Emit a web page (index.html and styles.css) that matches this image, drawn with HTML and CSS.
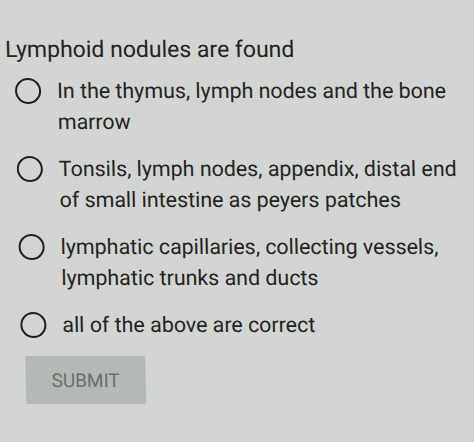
FILE: index.html
```html
<!DOCTYPE html>
<html>
<head>
<meta charset="utf-8">
<link rel="stylesheet" href="styles.css">
</head>
<body>
<div class="page">
  <div class="question">Lymphoid nodules are found</div>
  <div class="options">
    <label class="option"><span class="radio"></span><span class="text">In the thymus, lymph nodes and the bone marrow</span></label>
    <label class="option"><span class="radio"></span><span class="text">Tonsils, lymph nodes, appendix, distal end of small intestine as peyers patches</span></label>
    <label class="option"><span class="radio"></span><span class="text">lymphatic capillaries, collecting vessels, lymphatic trunks and ducts</span></label>
    <label class="option"><span class="radio"></span><span class="text">all of the above are correct</span></label>
  </div>
  <button class="submit">SUBMIT</button>
</div>
</body>
</html>
```
FILE: styles.css
```css
html, body {
  margin: 0;
  padding: 0;
  background: #d3d5d2;
  width: 474px;
  height: 442px;
  overflow: hidden;
}
.page {
  font-family: Roboto, "Liberation Sans", sans-serif;
  color: #222423;
  padding: 35px 0 0 4px;
  transform: skewX(1.3deg);
  transform-origin: 0 0;
  box-sizing: border-box;
  height: 442px;
}
.question {
  font-size: 23px;
  line-height: 30px;
}
.options {
  display: flex;
  flex-direction: column;
  gap: 16px;
  margin-top: 10px;
  padding-left: 9px;
}
.option {
  display: flex;
  align-items: flex-start;
  gap: 16px;
  font-size: 21.4px;
  line-height: 31px;
}
.radio {
  flex: none;
  width: 26px;
  height: 26px;
  box-sizing: border-box;
  border: 2.5px solid #1e201f;
  border-radius: 50%;
  margin-top: 2.5px;
}
.text {
  width: 402px;
}
.submit {
  margin: 16px 0 0 13px;
  width: 120px;
  height: 48px;
  border: none;
  border-radius: 2px;
  background: #b4b9b5;
  color: #6a6f6b;
  font-family: Roboto, "Liberation Sans", sans-serif;
  font-size: 19px;
  padding: 0;
}
```
